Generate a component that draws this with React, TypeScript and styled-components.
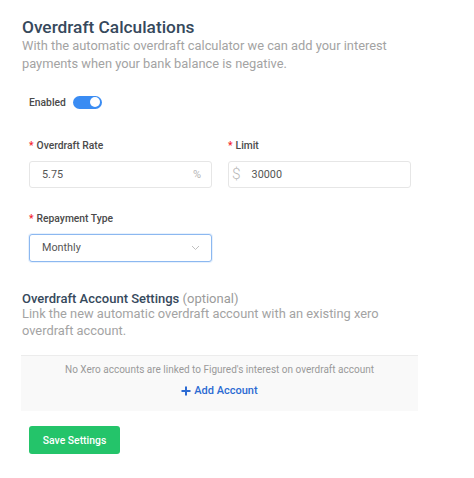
import React from "react";
import styled, { createGlobalStyle } from "styled-components";

const Global = createGlobalStyle`
  html, body { margin: 0; padding: 0; background: #ffffff; }
  body { font-family: Roboto, "Liberation Sans", Arial, sans-serif; -webkit-font-smoothing: antialiased; }
  * { box-sizing: border-box; }
`;

const Page = styled.div`
  width: 474px;
  height: 478px;
  padding: 17px 0 0 22px;
`;

const Title = styled.h1`
  margin: 0;
  font-size: 17.3px;
  line-height: 20px;
  font-weight: 500;
  color: #36495c;
`;

const Desc = styled.p<{ $top?: number }>`
  margin: ${(p) => p.$top ?? 0}px 0 0;
  width: 400px;
  font-size: 12.85px;
  line-height: 17.8px;
  color: #a3a3a3;
`;

const Indent = styled.div`
  padding-left: 7px;
`;

const ToggleRow = styled.div`
  display: flex;
  align-items: center;
  gap: 7px;
  margin-top: 22px;
  height: 15px;
`;

const ToggleLabel = styled.span`
  font-size: 10.3px;
  font-weight: 500;
  color: #4a4a4a;
`;

const Switch = styled.span`
  position: relative;
  display: inline-block;
  width: 29px;
  height: 13px;
  border-radius: 7px;
  background: #3a8cf3;
`;

const Knob = styled.span`
  position: absolute;
  top: 1.5px;
  right: 2px;
  width: 10px;
  height: 10px;
  border-radius: 50%;
  background: #ffffff;
`;

const Grid = styled.div`
  display: grid;
  grid-template-columns: 183px 183px;
  column-gap: 16px;
  margin-top: 28px;
`;

const Field = styled.div<{ $top?: number }>`
  display: flex;
  flex-direction: column;
  gap: 7px;
  margin-top: ${(p) => p.$top ?? 0}px;
  width: 183px;
`;

const Label = styled.label`
  font-size: 10.3px;
  line-height: 16px;
  font-weight: 500;
  color: #4a4a4a;
`;

const Star = styled.span`
  color: #f5222d;
  margin-right: 3px;
`;

const InputBox = styled.div<{ $focused?: boolean; $h?: number }>`
  display: flex;
  align-items: center;
  height: ${(p) => p.$h ?? 27}px;
  padding: 0 10px 0 12px;
  border: 1px solid ${(p) => (p.$focused ? "#8cb8f0" : "#e6e6e6")};
  border-radius: 3px;
  background: #ffffff;
  font-size: 10.8px;
  color: #555555;
  box-shadow: ${(p) => (p.$focused ? "0 0 0 1px rgba(60,140,240,0.12)" : "none")};
`;

const Value = styled.span`
  flex: 1;
`;

const Suffix = styled.span`
  color: #b5b5b5;
  font-size: 11px;
`;

const Prefix = styled.span`
  color: #b8b8b8;
  font-size: 15.5px;
  font-weight: 300;
  margin: 0 11px 0 -9px;
`;

const Chevron = styled.svg`
  width: 9px;
  height: 6px;
  margin-right: 1px;
`;

const SectionTitle = styled.h2`
  margin: 28px 0 0;
  font-size: 13px;
  line-height: 18px;
  font-weight: 500;
  color: #36495c;
`;

const Optional = styled.span`
  font-weight: 400;
  color: #9b9b9b;
`;

const Panel = styled.div`
  width: 397px;
  height: 56px;
  margin: 15px 0 0 -1px;
  border-top: 1px solid #ececec;
  background: #f9f9f9;
  display: flex;
  flex-direction: column;
  align-items: center;
  padding-top: 7px;
  gap: 6px;
`;

const PanelText = styled.div`
  font-size: 10px;
  line-height: 14px;
  color: #9a9a9a;
`;

const AddLink = styled.a`
  display: flex;
  align-items: center;
  gap: 3px;
  font-size: 11px;
  line-height: 16px;
  font-weight: 500;
  color: #2c6bd3;
  text-decoration: none;
`;

const SaveButton = styled.button`
  margin-top: 15px;
  width: 91px;
  height: 28px;
  border: none;
  border-radius: 3px;
  background: #24c46a;
  color: #ffffff;
  font-family: inherit;
  font-size: 10.4px;
  font-weight: 500;
`;

export default function App() {
  return (
    <>
      <Global />
      <Page>
        <Title>Overdraft Calculations</Title>
        <Desc $top={0}>
          With the automatic overdraft calculator we can add your interest payments when your bank balance is negative.
        </Desc>
        <Indent>
          <ToggleRow>
            <ToggleLabel>Enabled</ToggleLabel>
            <Switch>
              <Knob />
            </Switch>
          </ToggleRow>
          <Grid>
            <Field>
              <Label>
                <Star>*</Star>Overdraft Rate
              </Label>
              <InputBox>
                <Value>5.75</Value>
                <Suffix>%</Suffix>
              </InputBox>
            </Field>
            <Field>
              <Label>
                <Star>*</Star>Limit
              </Label>
              <InputBox>
                <Prefix>$</Prefix>
                <Value>30000</Value>
              </InputBox>
            </Field>
          </Grid>
          <Field $top={23}>
            <Label>
              <Star>*</Star>Repayment Type
            </Label>
            <InputBox $focused $h={28}>
              <Value>Monthly</Value>
              <Chevron viewBox="0 0 9 6">
                <path d="M1 1 L4.5 4.5 L8 1" fill="none" stroke="#c0c0c0" strokeWidth="1" />
              </Chevron>
            </InputBox>
          </Field>
        </Indent>
        <SectionTitle>
          Overdraft Account Settings <Optional>(optional)</Optional>
        </SectionTitle>
        <Desc $top={-3}>Link the new automatic overdraft account with an existing xero overdraft account.</Desc>
        <Panel>
          <PanelText>No Xero accounts are linked to Figured's interest on overdraft account</PanelText>
          <AddLink href="#">
            <svg width="10" height="10" viewBox="0 0 10 10">
              <path d="M5 0.5 V9.5 M0.5 5 H9.5" stroke="#2c6bd3" strokeWidth="2" />
            </svg>
            Add Account
          </AddLink>
        </Panel>
        <Indent>
          <SaveButton>Save Settings</SaveButton>
        </Indent>
      </Page>
    </>
  );
}
